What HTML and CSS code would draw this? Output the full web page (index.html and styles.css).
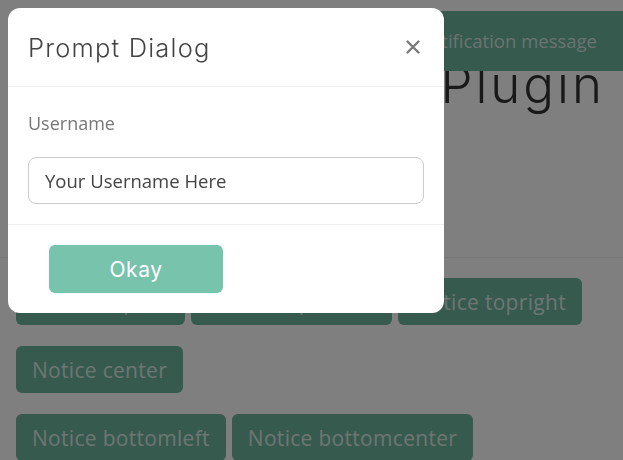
FILE: index.html
```html
<!DOCTYPE html>
<html>
<head>
  <meta charset="UTF-8">
  <title>Notice Plugin Demo</title>
  <link rel="stylesheet" href="styles.css">
</head>
<body>
  <div class="page">
    <h1>jQuery Notice Plugin</h1>
    <hr class="divider">
    <div class="demo-buttons">
      <div class="btn-row">
        <button class="notice-btn">Notice topleft</button>
        <button class="notice-btn">Notice topcenter</button>
        <button class="notice-btn">Notice topright</button>
      </div>
      <div class="btn-row">
        <button class="notice-btn">Notice center</button>
      </div>
      <div class="btn-row">
        <button class="notice-btn">Notice bottomleft</button>
        <button class="notice-btn">Notice bottomcenter</button>
        <button class="notice-btn">Notice bottomright</button>
      </div>
    </div>
  </div>

  <div class="toast">This is a notification message</div>

  <div class="overlay">
    <div class="dialog">
      <div class="dialog-header">
        <span class="dialog-title">Prompt Dialog</span>
        <button class="dialog-close" aria-label="Close">
          <svg width="14" height="14" viewBox="0 0 14 14">
            <path d="M1.5 1.5 L12.5 12.5 M12.5 1.5 L1.5 12.5" stroke="#7a7a7a" stroke-width="2.4" stroke-linecap="round" fill="none"/>
          </svg>
        </button>
      </div>
      <div class="dialog-body">
        <label class="field-label" for="username">Username</label>
        <input class="field-input" id="username" type="text" value="Your Username Here">
      </div>
      <div class="dialog-footer">
        <button class="okay-btn">Okay</button>
      </div>
    </div>
  </div>
</body>
</html>
```

FILE: styles.css
```css
html, body {
  margin: 0;
  height: 100%;
  overflow: hidden;
}
body {
  background: #fff;
  font-family: "Open Sans", sans-serif;
}
.page {
  padding: 0 16px;
}
h1 {
  margin: 0;
  padding: 54px 2px 0 0;
  height: 257px;
  box-sizing: border-box;
  text-align: right;
  font-family: Inter, sans-serif;
  font-weight: 300;
  font-size: 51px;
  letter-spacing: 3px;
  color: #333;
  white-space: nowrap;
}
.divider {
  margin: 0 -16px;
  border: 0;
  border-top: 1px solid #eee;
}
.demo-buttons {
  padding-top: 20px;
}
.btn-row {
  display: flex;
  flex-wrap: wrap;
  gap: 21px 6px;
  margin-bottom: 21px;
}
.notice-btn {
  height: 47px;
  padding: 0 16px;
  border: none;
  border-radius: 6px;
  background: #6db59d;
  color: rgba(255,255,255,0.75);
  font-family: "Open Sans", sans-serif;
  font-size: 21px;
  letter-spacing: 0.3px;
}
.toast {
  position: absolute;
  top: 11px;
  right: 0;
  height: 60px;
  line-height: 60px;
  padding: 0 26px 0 30px;
  background: #6db59d;
  color: rgba(255,255,255,0.7);
  font-size: 18.5px;
}
.overlay {
  position: fixed;
  inset: 0;
  background: rgba(0,0,0,0.5);
  padding: 8px;
}
.dialog {
  width: 436px;
  background: #fff;
  border-radius: 12px;
  overflow: hidden;
}
.dialog-header {
  display: flex;
  align-items: center;
  justify-content: space-between;
  height: 78px;
  padding: 0 24px 0 20px;
  border-bottom: 1px solid #eee;
}
.dialog-title {
  font-family: Inter, sans-serif;
  font-weight: 300;
  font-size: 25.5px;
  letter-spacing: 1.2px;
  color: #444;
}
.dialog-close {
  border: none;
  background: none;
  padding: 0;
  display: flex;
}
.dialog-body {
  padding: 24px 20px 20px;
}
.field-label {
  display: block;
  font-size: 18px;
  color: #777;
  margin-bottom: 22px;
}
.field-input {
  box-sizing: border-box;
  width: 100%;
  height: 47px;
  padding: 0 16px;
  border: 1px solid #ccc;
  border-radius: 8px;
  font-family: "Open Sans", sans-serif;
  font-size: 18.5px;
  color: #444;
}
.dialog-footer {
  border-top: 1px solid #eee;
  padding: 20px 20px 20px 41px;
}
.okay-btn {
  width: 174px;
  height: 48px;
  border: none;
  border-radius: 6px;
  background: #77c3ac;
  color: #fff;
  font-family: Inter, sans-serif;
  font-size: 21px;
  letter-spacing: 0.5px;
}
```
